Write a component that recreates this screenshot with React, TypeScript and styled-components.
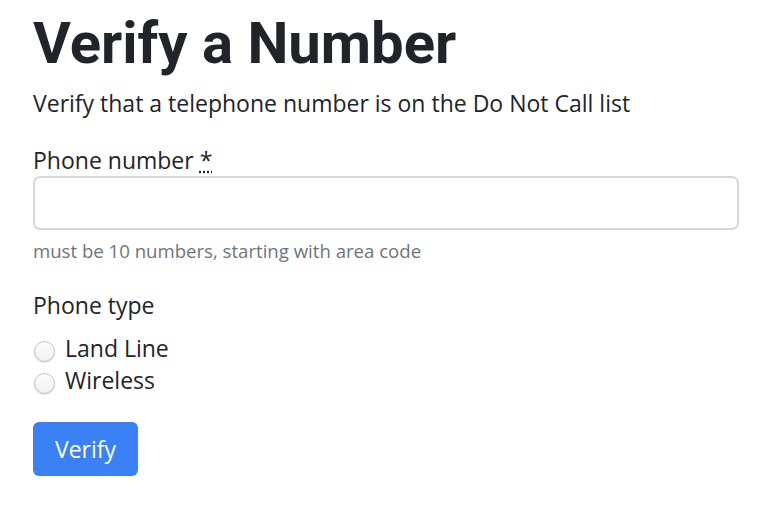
import styled, { createGlobalStyle } from "styled-components";

const GlobalStyle = createGlobalStyle`
  body {
    margin: 0;
    background: #ffffff;
    font-family: "Open Sans", "Noto Sans", sans-serif;
    color: #212529;
  }
`;

const phoneTypes = ["Land Line", "Wireless"];

export default function App() {
  return (
    <>
      <GlobalStyle />
      <Page>
        <Title>Verify a Number</Title>
        <Lead>Verify that a telephone number is on the Do Not Call list</Lead>
        <Field>
          <Label>
            Phone number <Required title="required">*</Required>
          </Label>
          <Input type="text" />
          <Help>must be 10 numbers, starting with area code</Help>
        </Field>
        <Fieldset>
          <Legend>Phone type</Legend>
          {phoneTypes.map((t) => (
            <RadioRow key={t}>
              <Radio type="radio" name="phoneType" />
              <RadioLabel>{t}</RadioLabel>
            </RadioRow>
          ))}
        </Fieldset>
        <Button type="button">Verify</Button>
      </Page>
    </>
  );
}

const Page = styled.div`
  padding: 11px 29px 0 33px;
  display: flex;
  flex-direction: column;
  align-items: flex-start;
`;

const Title = styled.h1`
  margin: 0;
  font-family: Roboto, "Liberation Sans", sans-serif;
  font-weight: 700;
  font-size: 58px;
  line-height: 64px;
  color: #212529;
`;

const Lead = styled.p`
  margin: 12px 0 0;
  font-size: 23px;
  line-height: 32px;
`;

const Field = styled.div`
  margin-top: 26px;
  width: 100%;
  display: flex;
  flex-direction: column;
`;

const Label = styled.label`
  font-size: 23px;
  line-height: 30px;
`;

const Required = styled.abbr`
  text-decoration: underline dotted;
  cursor: help;
`;

const Input = styled.input`
  margin-top: 1px;
  box-sizing: border-box;
  width: 100%;
  height: 54px;
  border: 2px solid #d3d8de;
  border-radius: 7px;
  background: #fff;
  font-size: 23px;
  padding: 0 16px;
  outline: none;
`;

const Help = styled.small`
  margin-top: 8px;
  font-size: 18.6px;
  line-height: 26px;
  color: #6c757d;
`;

const Fieldset = styled.fieldset`
  margin: 26px 0 0;
  padding: 0;
  border: 0;
  display: flex;
  flex-direction: column;
`;

const Legend = styled.legend`
  padding: 0;
  font-size: 23px;
  line-height: 30px;
  margin-bottom: 12px;
`;

const RadioRow = styled.label`
  display: flex;
  align-items: flex-end;
  gap: 10px;
  font-size: 23px;
  line-height: 32px;
`;

const Radio = styled.input`
  appearance: none;
  margin: 0 0 2px 1px;
  width: 21px;
  height: 21px;
  border-radius: 50%;
  border: 1px solid #bdbdbd;
  background: linear-gradient(#fdfdfd, #f1f1f1);
  box-shadow: 0 1px 1px rgba(0, 0, 0, 0.12);
`;

const RadioLabel = styled.span`
  color: #212529;
`;

const Button = styled.button`
  margin-top: 26px;
  width: 105px;
  height: 54px;
  border: 0;
  border-radius: 6px;
  background: #3a81f6;
  color: #fff;
  font-family: "Open Sans", sans-serif;
  font-size: 23px;
`;
